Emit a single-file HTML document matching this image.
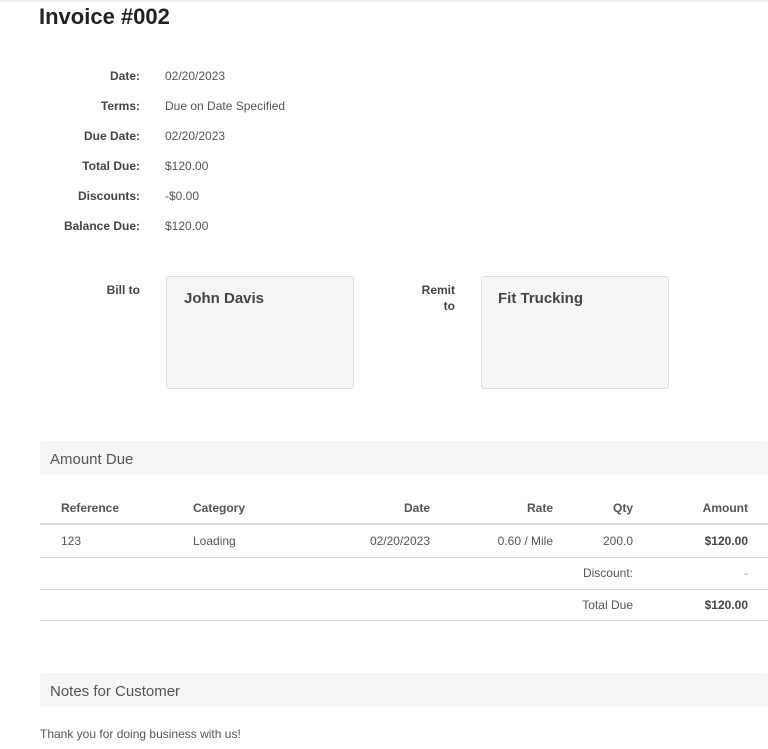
<!DOCTYPE html>
<html><head><style>
*{margin:0;padding:0;box-sizing:border-box}
body{width:768px;height:749px;background:#fff;font-family:"Liberation Sans",sans-serif;color:#555;position:relative;overflow:hidden}
.a{position:absolute;white-space:nowrap;line-height:1}
.l{font-size:12px;font-weight:bold;color:#444;text-align:right;width:140px;left:0}
.v{font-size:12px;left:165px;color:#555}
.box{position:absolute;background:#f6f6f6;border:1px solid #ddd;border-radius:3px;width:188px;height:113px;top:276px}
.nm{font-size:15px;font-weight:bold;color:#444}
.bar{position:absolute;left:40px;width:728px;height:34px;background:#f5f5f5;border-radius:3px}
.bar span{position:absolute;left:10px;top:10px;font-size:15px;color:#555}
.hr{position:absolute;left:40px;width:728px;height:1px;background:#ddd}
.th{font-size:12px;font-weight:bold;color:#555}
.td{font-size:12px;color:#555}
.r{text-align:right}
</style></head><body>
<div style="position:absolute;left:0;top:0;width:768px;height:2px;background:#eee"></div>
<div class="a" style="left:39px;top:6px;font-size:22px;font-weight:bold;color:#222">Invoice #002</div>

<div class="a l" style="top:70px">Date:</div><div class="a v" style="top:70px">02/20/2023</div>
<div class="a l" style="top:100px">Terms:</div><div class="a v" style="top:100px">Due on Date Specified</div>
<div class="a l" style="top:130px">Due Date:</div><div class="a v" style="top:130px">02/20/2023</div>
<div class="a l" style="top:160px">Total Due:</div><div class="a v" style="top:160px">$120.00</div>
<div class="a l" style="top:190px">Discounts:</div><div class="a v" style="top:190px">-$0.00</div>
<div class="a l" style="top:220px">Balance Due:</div><div class="a v" style="top:220px">$120.00</div>

<div class="a l" style="top:284px">Bill to</div>
<div class="box" style="left:166px"></div>
<div class="a nm" style="left:184px;top:291px">John Davis</div>
<div class="a th r" style="left:355px;width:100px;top:284px;color:#444">Remit</div>
<div class="a th r" style="left:355px;width:100px;top:300px;color:#444">to</div>
<div class="box" style="left:481px"></div>
<div class="a nm" style="left:498px;top:291px">Fit Trucking</div>

<div class="bar" style="top:441px"><span>Amount Due</span></div>
<div class="a th" style="left:61px;top:502px">Reference</div>
<div class="a th" style="left:193px;top:502px">Category</div>
<div class="a th r" style="left:330px;width:100px;top:502px">Date</div>
<div class="a th r" style="left:453px;width:100px;top:502px">Rate</div>
<div class="a th r" style="left:533px;width:100px;top:502px">Qty</div>
<div class="a th r" style="left:648px;width:100px;top:502px">Amount</div>
<div class="hr" style="top:523px;height:2px"></div>
<div class="a td" style="left:61px;top:535px">123</div>
<div class="a td" style="left:193px;top:535px">Loading</div>
<div class="a td r" style="left:330px;width:100px;top:535px">02/20/2023</div>
<div class="a td r" style="left:453px;width:100px;top:535px">0.60 / Mile</div>
<div class="a td r" style="left:533px;width:100px;top:535px">200.0</div>
<div class="a th r" style="left:648px;width:100px;top:535px;color:#444">$120.00</div>
<div class="hr" style="top:557px"></div>
<div class="a td r" style="left:533px;width:100px;top:567px">Discount:</div>
<div class="a td r" style="left:648px;width:100px;top:567px;color:#999">-</div>
<div class="hr" style="top:589px"></div>
<div class="a td r" style="left:533px;width:100px;top:599px">Total Due</div>
<div class="a th r" style="left:648px;width:100px;top:599px;color:#444">$120.00</div>
<div class="hr" style="top:620px"></div>

<div class="bar" style="top:673px"><span>Notes for Customer</span></div>
<div class="a td" style="left:40px;top:728px">Thank you for doing business with us!</div>
</body></html>
